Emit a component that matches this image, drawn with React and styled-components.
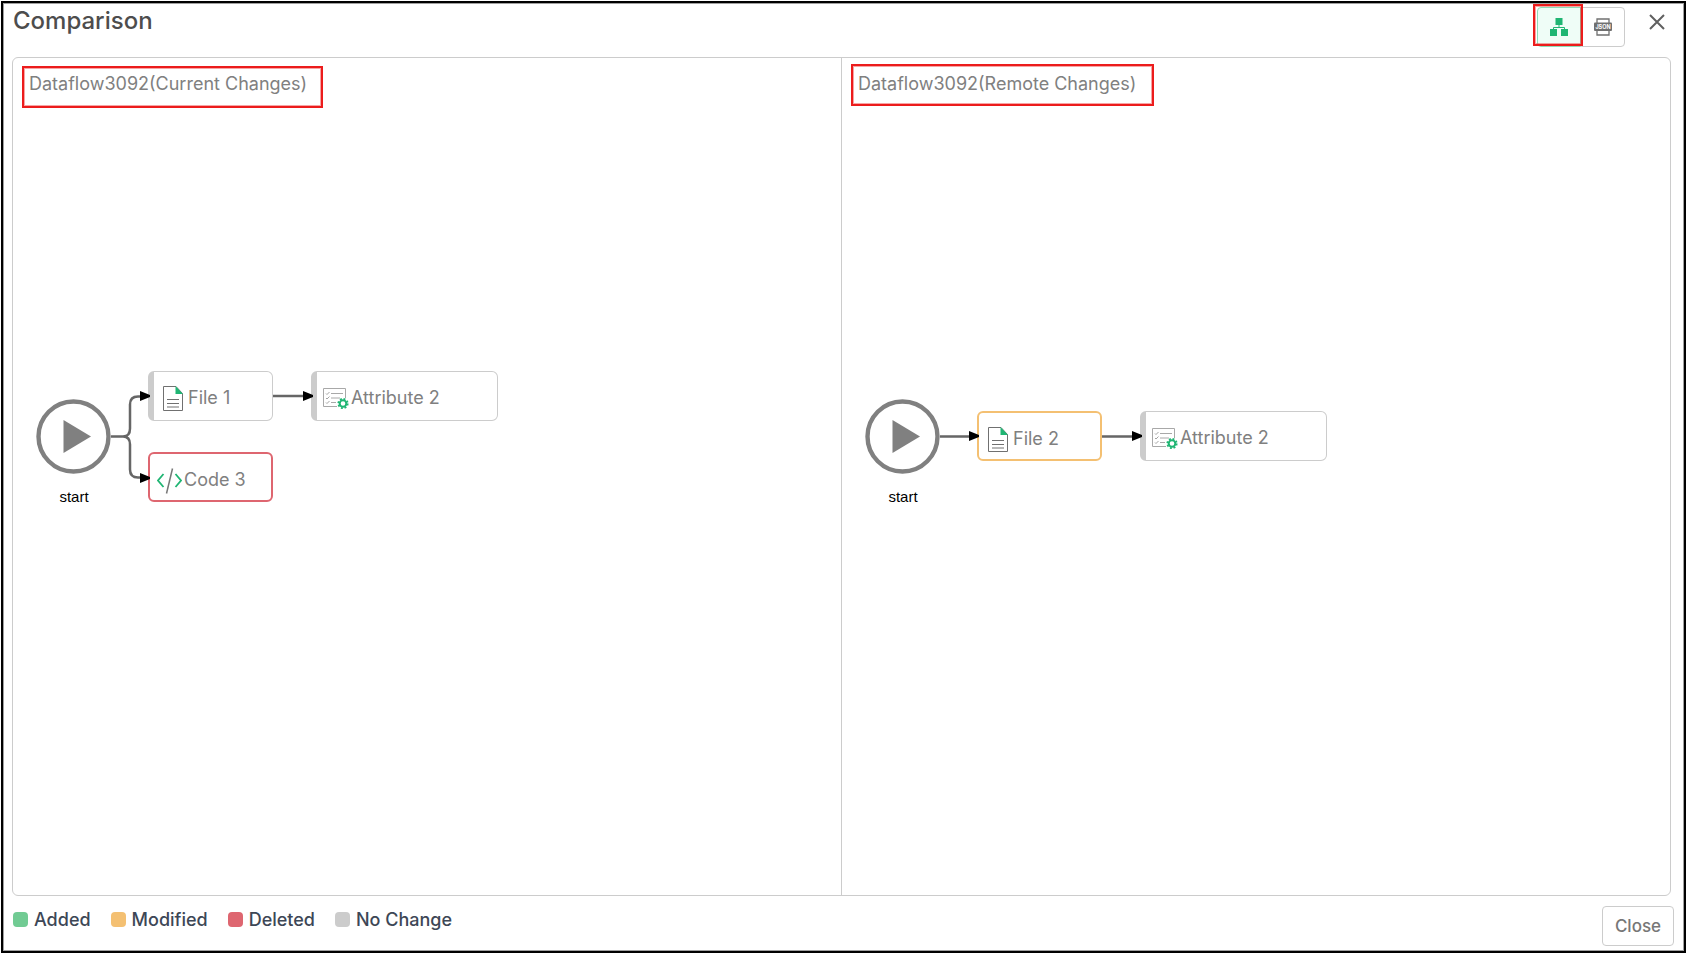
import React, { useState } from 'react';
import styled, { createGlobalStyle } from 'styled-components';

const GlobalStyle = createGlobalStyle`
    * {
        box-sizing:border-box;
    }
    body {
        margin:0;
        background-color:white;
        font-family:"Inter", sans-serif;
    }
    button {
        font-family:inherit;
        cursor:pointer;
    }
`
const Dialog = styled.div`
    display:flex;
    flex-direction:column;
    min-height:calc(100vh - 2px);
    margin:1px;
    padding:0 13px 0 9px;
    border:2px solid black;
    box-shadow:inset 0 0 0 1px #a0a0a0;
`
const Header = styled.header`
    display:flex;
    justify-content:space-between;
    height:54px;
    padding-left:1px;
`
const Title = styled.h1`
    margin:2px 0 0;
    font-size:24px;
    line-height:32px;
    font-weight:500;
    color:#4d4d4d;
`
const Tools = styled.div`
    display:flex;
    align-items:flex-start;
`
const ToggleGroup = styled.div`
    display:flex;
    position:relative;
    margin:4px 24px 0 0;
`
const ToggleBtn = styled.button`
    display:flex;
    justify-content:center;
    align-items:center;
    width:44px;
    height:40px;
    padding:0;
    border:1px solid ${props => props.$active ? '#8fdcb8' : '#cccccc'};
    border-radius:${props => props.$last ? '0 4px 4px 0' : '4px 0 0 4px'};
    background-color:${props => props.$active ? '#effdf7' : 'white'};
`
const Marker = styled.span`
    position:absolute;
    top:-3px;
    left:-4px;
    width:50px;
    height:42px;
    border:2px solid #ec1c1c;
    box-shadow:inset 0 0 0 1px rgba(236, 28, 28, 0.4);
    pointer-events:none;
`
const CloseIcon = styled.button`
    display:flex;
    margin:11px 6px 0 0;
    padding:0;
    border:0;
    background:none;
`
const Panes = styled.main`
    display:flex;
    flex:1;
    border:1px solid #cccccc;
    border-radius:6px;
`
const Pane = styled.section`
    flex:1;
    padding:${props => props.$last ? '6px 9px' : '8px 9px'};
    position:relative;
    & + & {
        border-left:1px solid #cccccc;
    }
`
const PaneTitle = styled.h2`
    display:inline-block;
    margin:0;
    padding:${props => props.$last ? '4px 16px 6px 5px' : '2px 14px 8px 5px'};
    border:2px solid #ec1c1c;
    box-shadow:inset 0 0 0 1px rgba(236, 28, 28, 0.4);
    font-size:18px;
    line-height:28px;
    font-weight:400;
    color:#808080;
`
const Edges = styled.svg`
    position:absolute;
    top:0;
    left:0;
    width:500px;
    height:500px;
    pointer-events:none;
`
const Node = styled.div`
    position:absolute;
    left:${props => props.$x}px;
    top:${props => props.$y}px;
`
const StartNode = styled(Node)`
    display:flex;
    flex-direction:column;
    align-items:center;
    gap:12px;
    width:76px;
    font-family:"Liberation Sans", Arial, sans-serif;
    font-size:15px;
    line-height:20px;
    color:black;
`
const StepNode = styled(Node)`
    display:flex;
    align-items:center;
    gap:${props => props.$gap}px;
    width:${props => props.$wide ? 187 : 125}px;
    height:50px;
    padding-top:${props => props.$plain ? 3 : 5}px;
    padding-left:${props => props.$pad}px;
    border-style:solid;
    border-color:${props => props.$color};
    border-width:${props => props.$plain ? '1px 1px 1px 6px' : '2px'};
    border-radius:6px;
    font-size:18px;
    line-height:24px;
    color:#808080;
    svg {
        margin-top:2px;
    }
`
const Footer = styled.footer`
    display:flex;
    justify-content:space-between;
    height:55px;
    padding-left:1px;
`
const Legend = styled.ul`
    display:flex;
    gap:20px;
    margin:11px 0 0;
    padding:0;
    list-style:none;
`
const LegendItem = styled.li`
    display:flex;
    align-items:center;
    gap:6px;
    height:24px;
    font-size:18px;
    font-weight:500;
    color:#3d4756;
`
const Swatch = styled.span`
    width:15px;
    height:15px;
    border-radius:4px;
    background-color:${props => props.$color};
`
const CloseBtn = styled.button`
    width:72px;
    height:40px;
    margin:10px -3px 0 0;
    padding:0;
    border:1px solid #cccccc;
    border-radius:4px;
    background-color:white;
    font-size:17px;
    font-weight:500;
    color:#777777;
`

const colors = {
    added:'#71cb93',
    modified:'#f4c072',
    deleted:'#de6670',
    none:'#cccccc'
}

const legend = [
    { label:'Added', color:colors.added },
    { label:'Modified', color:colors.modified },
    { label:'Deleted', color:colors.deleted },
    { label:'No Change', color:colors.none }
]

const TreeIcon = () => (
    <svg width="18" height="18" viewBox="0 0 18 18">
        <path d="M9 7v3M3.5 12v-2.5h11V12" fill="none" stroke="#1fb573" />
        <path d="M5.5 0h7v7h-7zM0 11h7v7H0zM11 11h7v7h-7z" fill="#1fb573" />
    </svg>
)

const JsonIcon = () => (
    <svg width="18" height="18" viewBox="0 0 18 18">
        <path d="M3 5V1h12v4M3 13v4h12v-4" fill="none" stroke="#707070" strokeWidth="1.3" />
        <rect y="4.5" width="18" height="8.5" rx="1" fill="#707070" />
        <text x="9" y="10.8" textAnchor="middle" fontSize="5.5" fontWeight="700" fill="white">JSON</text>
    </svg>
)

const PlayIcon = () => (
    <svg width="76" height="76" viewBox="0 0 76 76">
        <circle cx="37.5" cy="37.5" r="35" fill="white" stroke="#808080" strokeWidth="4.4" />
        <path d="M27.5 21v33L55 37.500z" fill="#808080" />
    </svg>
)

const FileIcon = () => (
    <svg width="20" height="25" viewBox="0 0 20 25">
        <path d="M.5.5H13l6.5 7v17H.5z" fill="white" stroke="#707070" />
        <path d="M12.5 0 20 8h-7.5z" fill="#1fb573" />
        <path d="M4 13.5h12M4 17.5h12M4 21h12" stroke="#707070" />
    </svg>
)

const CodeIcon = () => (
    <svg width="25" height="26" viewBox="0 0 25 26" fill="none">
        <path d="M6.5 6 1 12.5 6.5 19M18.5 6l5.5 6.5-5.5 6.5" stroke="#1fb573" strokeWidth="1.8" />
        <path d="M15.5.5l-6 25" stroke="#777777" strokeWidth="1.5" />
    </svg>
)

const AttributeIcon = () => (
    <svg width="26" height="22" viewBox="0 0 26 22" fill="none">
        <path d="M14 18.5H.5V.5h22V10" stroke="#a8a8a8" />
        <path d="M8 5.5h12M8 10h9M8 14.5h5" stroke="#a8a8a8" />
        <path d="m3 5.5 1 1L6.5 4M3 10l1 1L6.5 8.5M3 14.5l1 1L6.5 13" stroke="#999999" strokeWidth=".9" />
        <circle cx="20" cy="15.5" r="4.7" stroke="#1fb573" strokeWidth="1.8" strokeDasharray="1.9 1.79" />
        <circle cx="20" cy="15.5" r="3.3" fill="white" stroke="#1fb573" strokeWidth="2" />
    </svg>
)

const XIcon = () => (
    <svg width="16" height="16" viewBox="0 0 16 16">
        <path d="M1 1l14 14M15 1L1 15" stroke="#606060" strokeWidth="2" />
    </svg>
)

const Arrow = ({ x, y }) => <path d={`M${x - 10} ${y - 5}v10l10-4v-2z`} fill="black" />

const App = () => {
    const [view, setView] = useState('flow');

    return (
    <>
    <GlobalStyle />
    <Dialog>
        <Header>
            <Title>Comparison</Title>
            <Tools>
                <ToggleGroup>
                    <ToggleBtn aria-label="Flow view" $active={view === 'flow'} onClick={() => setView('flow')}><TreeIcon /></ToggleBtn>
                    <ToggleBtn aria-label="JSON view" $last $active={view === 'json'} onClick={() => setView('json')}><JsonIcon /></ToggleBtn>
                    <Marker />
                </ToggleGroup>
                <CloseIcon aria-label="Close dialog"><XIcon /></CloseIcon>
            </Tools>
        </Header>
        <Panes>
            <Pane>
                <PaneTitle>Dataflow3092(Current Changes)</PaneTitle>
                <StartNode $x={23} $y={341}><PlayIcon />start</StartNode>
                <StepNode $x={135} $y={313} $plain $color={colors.none} $pad={9} $gap={5}><FileIcon />File 1</StepNode>
                <StepNode $x={135} $y={394} $color={colors.deleted} $pad={7} $gap={2}><CodeIcon />Code 3</StepNode>
                <StepNode $x={298} $y={313} $plain $wide $color={colors.none} $pad={6} $gap={2}><AttributeIcon />Attribute 2</StepNode>
                <Edges>
                    <path d="M98 378.5h12q7 0 7-8v-24q0-8 8-8h4M110 378.5q7 0 7 8v25q0 8 8 8h4" fill="none" stroke="#666666" strokeWidth="2.5" />
                    <path d="M260 338h31" stroke="#666666" strokeWidth="2.5" />
                    <Arrow x={137} y={338} />
                    <Arrow x={137} y={420} />
                    <Arrow x={300} y={338} />
                </Edges>
            </Pane>
            <Pane $last>
                <PaneTitle $last>Dataflow3092(Remote Changes)</PaneTitle>
                <StartNode $x={23} $y={341}><PlayIcon />start</StartNode>
                <StepNode $x={135} $y={353} $color={colors.modified} $pad={9} $gap={5}><FileIcon />File 2</StepNode>
                <StepNode $x={298} $y={353} $plain $wide $color={colors.none} $pad={6} $gap={2}><AttributeIcon />Attribute 2</StepNode>
                <Edges>
                    <path d="M98 378.5h31M260 378.5h31" stroke="#666666" strokeWidth="2.5" />
                    <Arrow x={137} y={378} />
                    <Arrow x={300} y={378} />
                </Edges>
            </Pane>
        </Panes>
        <Footer>
            <Legend>
                {legend.map(({ label, color }) => (
                    <LegendItem key={label}><Swatch $color={color} />{label}</LegendItem>
                ))}
            </Legend>
            <CloseBtn>Close</CloseBtn>
        </Footer>
    </Dialog>
    </>
    );
};

export default App;
